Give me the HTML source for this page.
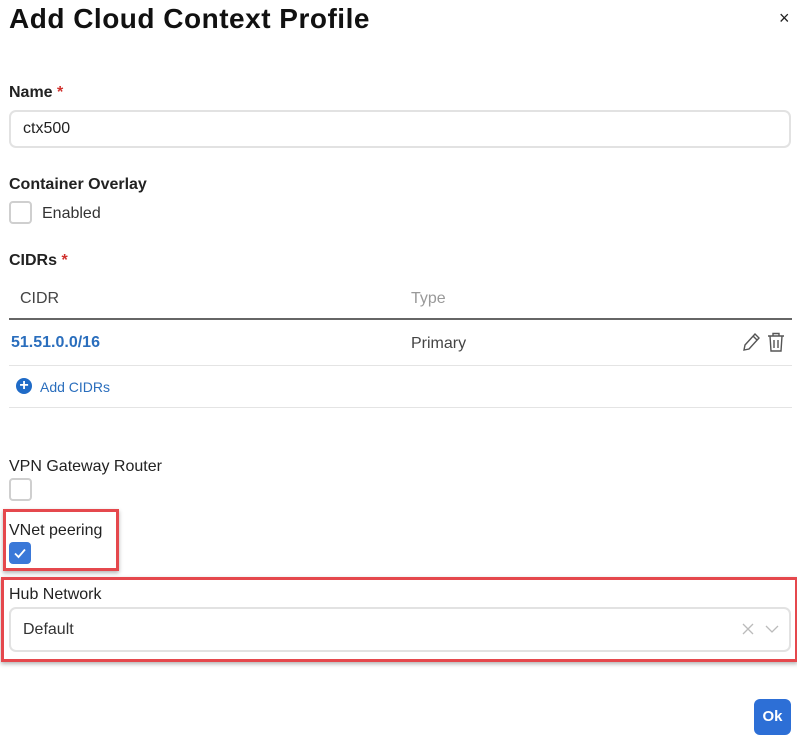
<!DOCTYPE html>
<html><head><meta charset="utf-8"><style>
body{margin:0;width:797px;height:744px;background:#fff;font-family:"Liberation Sans",sans-serif;color:#222;position:relative;overflow:hidden}
.a{position:absolute;white-space:nowrap}
.lbl{font-size:16px;font-weight:bold;color:#222}
.cb{position:absolute;width:19px;height:19px;border:2px solid #cfcfcf;border-radius:4px;background:#fff}
.red{position:absolute;border:3px solid #e5484d;box-shadow:0 2px 4px rgba(0,0,0,.3)}
</style></head><body>
<div class="a" style="left:9px;top:3px;font-size:28px;font-weight:bold;color:#111;letter-spacing:0.5px">Add Cloud Context Profile</div>
<div class="a" style="left:779px;top:8px;font-size:18px;color:#222">×</div>

<div class="a lbl" style="left:9px;top:84px">Name <span style="color:#d0312d">*</span></div>
<div class="a" style="left:9px;top:110px;width:778px;height:34px;border:2px solid #e2e2e2;border-radius:7px"></div>
<div class="a" style="left:23px;top:120px;font-size:16px">ctx500</div>

<div class="a lbl" style="left:9px;top:176px">Container Overlay</div>
<div class="cb" style="left:9px;top:201px"></div>
<div class="a" style="left:42px;top:205px;font-size:16px;color:#333">Enabled</div>

<div class="a lbl" style="left:9px;top:252px">CIDRs <span style="color:#d0312d">*</span></div>
<div class="a" style="left:20px;top:290px;font-size:16px;color:#444">CIDR</div>
<div class="a" style="left:411px;top:290px;font-size:16px;color:#999">Type</div>
<div class="a" style="left:9px;top:318px;width:783px;height:2px;background:#666"></div>
<div class="a" style="left:11px;top:334px;font-size:16px;font-weight:bold;color:#2a6ebd">51.51.0.0/16</div>
<div class="a" style="left:411px;top:335px;font-size:16px;color:#444">Primary</div>
<svg class="a" style="left:740px;top:331px" width="46" height="22" viewBox="0 0 46 22" fill="none" stroke="#555" stroke-width="1.4">
<path d="M4 19 L5 14 L15 3 L19 7 L9 18 Z M13 5 L17 9"/>
<path d="M28 5 H44 M33 5 V2.5 H39 V5 M30 5 L31 20 H41 L42 5 M34 9 V17 M38 9 V17"/>
</svg>
<div class="a" style="left:9px;top:365px;width:783px;height:1px;background:#e4e4e4"></div>
<div class="a" style="left:16px;top:378px;width:16px;height:16px;border-radius:50%;background:#1f6bc7;color:#fff;font-size:16px;font-weight:bold;line-height:16px;text-align:center">+</div>
<div class="a" style="left:40px;top:379px;font-size:14px;color:#2a6ebd">Add CIDRs</div>
<div class="a" style="left:9px;top:407px;width:783px;height:1px;background:#e4e4e4"></div>

<div class="a" style="left:9px;top:458px;font-size:16px;color:#222">VPN Gateway Router</div>
<div class="cb" style="left:9px;top:478px"></div>

<div class="red" style="left:3px;top:509px;width:110px;height:56px"></div>
<div class="a" style="left:9px;top:522px;font-size:16px;color:#222">VNet peering</div>
<div class="a" style="left:9px;top:542px;width:22px;height:22px;border-radius:4px;background:#3a78d8"></div>
<svg class="a" style="left:9px;top:542px" width="22" height="22"><path d="M6 11.5 L9.5 15 L16 7.5" stroke="#fff" stroke-width="1.8" fill="none"/></svg>

<div class="red" style="left:1px;top:577px;width:791px;height:79px"></div>
<div class="a" style="left:9px;top:586px;font-size:16px;color:#222">Hub Network</div>
<div class="a" style="left:9px;top:607px;width:778px;height:41px;border:2px solid #e2e2e2;border-radius:7px"></div>
<div class="a" style="left:23px;top:621px;font-size:16px;color:#333">Default</div>
<svg class="a" style="left:740px;top:621px" width="44" height="16" fill="none" stroke="#bbb" stroke-width="1.3"><path d="M3 3 L13 13 M13 3 L3 13"/><path d="M26 5 L32 11 L38 5"/></svg>

<div class="a" style="left:754px;top:699px;width:37px;height:36px;border-radius:6px;background:#2d6fd6;color:#fff;font-size:15px;font-weight:bold;line-height:36px;text-align:center">Ok</div>
</body></html>
